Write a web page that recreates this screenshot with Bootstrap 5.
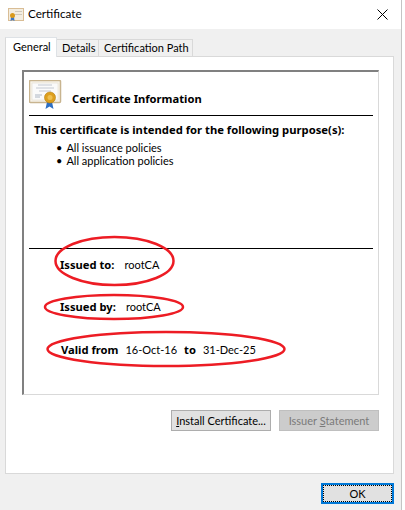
<!DOCTYPE html>
<html lang="en">
<head>
<meta charset="utf-8">
<title>Certificate</title>
<link href="https://cdn.jsdelivr.net/npm/bootstrap@5.3.0/dist/css/bootstrap.min.css" rel="stylesheet">
<style>
html,body{width:405px;height:510px;overflow:hidden;background:#fff;}
body{font-family:Lato,"Noto Sans",sans-serif;font-size:11px;color:#000;line-height:1.2;}
.dlg{position:relative;width:402px;height:510px;border-right:1px solid #c4c4c4;}
.ttl{height:29px;padding:0 13px 0 8px;background:#fff;}
.ttl-text{font-size:11.7px;margin-left:4px;margin-bottom:2px;}
.ttl-x{width:11px;height:11px;margin-left:auto;}
.gbody{height:481px;background:#f0f0f0;padding:8px 7px 0 5px;}
.tabset{border:0;height:19px;flex-wrap:nowrap;position:relative;z-index:1;}
.tabset .nav-link{font-size:11px;color:#000;background:#f0f0f0;border:1px solid #d9d9d9;border-left:0;border-radius:0;height:18px;margin-top:2px;padding:0 5px;line-height:16px;white-space:nowrap;}
.tabset .nav-link.active{background:#fff;color:#000;height:20px;margin-top:0;border-left:1px solid #d9d9d9;border-bottom:0;padding:0 7px;line-height:17px;}
.tabw1{width:52px;}.tabw2{width:42px;}.tabw3{width:94px;}
.pane{width:389px;height:418px;background:#fff;border:1px solid #d9d9d9;padding:13px 14px 0 16px;}
.infobox{width:357px;height:325px;border:1px solid #d9d9d9;border-top:2px solid #808080;border-left:2px solid #808080;padding:0 5px;}
.headrow{height:44px;border-bottom:1px solid #000;padding-top:8px;}
.headtext{font-family:"Noto Sans",sans-serif;font-weight:700;font-size:11.2px;margin-left:10px;margin-top:12px;}
.purpose{font-family:"Noto Sans",sans-serif;font-weight:700;margin:7px 0 0 5px;font-size:11.25px;white-space:nowrap;}
.plist{margin:4px 0 0 27px;padding:0;list-style:none;}
.plist li{height:13px;line-height:13px;}
.plist li::before{content:"•";margin-right:4px;}
.spacer-block{height:82px;border-bottom:1px solid #000;}
.detail{display:flex;align-items:center;height:14px;white-space:nowrap;}
.detail b{font-family:"Noto Sans",sans-serif;font-weight:700;font-size:11.2px;}
.d1{margin:9px 0 0 31px;}
.d2{margin:28px 0 0 31px;}
.d3{margin:29px 0 0 32px;}
.gap1{margin-left:10px;}.gap2{margin-left:7px;}
.btnrow{margin-top:15px;width:357px;gap:8px;}
.wbtn{width:100px;height:21px;padding:0;border-radius:0;font-size:11px;line-height:17px;background:#e1e1e1;border:1px solid #adadad;color:#000;white-space:nowrap;}
.wbtn:disabled{opacity:1;background:#cccccc;border-color:#bfbfbf;color:#7a7a7a;}
.footrow{padding-top:9px;}
.okbtn{width:73px;height:21px;padding:0;border-radius:0;font-size:11px;line-height:15px;background:#e1e1e1;border:2px solid #0078d7;color:#000;outline:1px dotted #000;outline-offset:-3px;}
.ovals{position:absolute;left:0;top:0;pointer-events:none;}
.cert-big{width:33px;height:29px;}
.cert-small{width:16px;height:14px;}
</style>
</head>
<body>
<div class="dlg">
  <div class="ttl d-flex align-items-center">
    <svg class="cert-small" viewBox="0 0 16 14"><rect x=".5" y=".5" width="15" height="12" fill="#f3ede0" stroke="#d9bd95"/><rect x="7" y="3" width="7" height="1" fill="#cfc8bb"/><rect x="7" y="6" width="7" height="1" fill="#cfc8bb"/><path d="M3 9l-.5 4 2-1 2 1-.5-4z" fill="#3b78c9"/><circle cx="4.500" cy="7.500" r="2.500" fill="#d99a1c"/></svg>
    <span class="ttl-text">Certificate</span>
    <svg class="ttl-x" viewBox="0 0 11 11"><path d="M.5.5l10 10M10.500.5l-10 10" stroke="#000" stroke-width="1" fill="none"/></svg>
  </div>
  <div class="gbody">
    <ul class="nav nav-tabs tabset">
      <li class="nav-item tabw1"><a class="nav-link active" href="#">General</a></li>
      <li class="nav-item tabw2"><a class="nav-link" href="#">Details</a></li>
      <li class="nav-item tabw3"><a class="nav-link" href="#">Certification Path</a></li>
    </ul>
    <div class="pane">
      <div class="infobox">
        <div class="headrow d-flex align-items-start">
          <svg class="cert-big" viewBox="0 0 33 29"><rect x=".5" y=".5" width="31" height="22" rx="1" fill="#f7f3ea" stroke="#c8b48f" stroke-width="1.500"/><rect x="3" y="3" width="26" height="17" fill="#fafafa" stroke="#e0d8c8" stroke-width=".5"/><path d="M9 5h14M7 8h18M10 11h12" stroke="#b6bcc8" stroke-width=".8"/><path d="M6 15h7M6 17h5" stroke="#9aa4b5" stroke-width=".8"/><path d="M18 22l-1.500 7 4-2.500 4 2.500-1.500-7z" fill="#2d6fc4"/><circle cx="21" cy="17.500" r="5.500" fill="#dd9f1e" stroke="#b67e10" stroke-width=".6"/><circle cx="21" cy="17.500" r="2.500" fill="#efc050"/></svg>
          <span class="headtext">Certificate Information</span>
        </div>
        <div class="purpose">This certificate is intended for the following purpose(s):</div>
        <ul class="plist">
          <li>All issuance policies</li>
          <li>All application policies</li>
        </ul>
        <div class="spacer-block"></div>
        <div class="detail d1"><b>Issued to:</b><span class="gap1">rootCA</span></div>
        <div class="detail d2"><b>Issued by:</b><span class="gap1">rootCA</span></div>
        <div class="detail d3"><b>Valid from</b><span class="gap2">16-Oct-16</span><b class="gap2">to</b><span class="gap2">31-Dec-25</span></div>
      </div>
      <div class="d-flex justify-content-end btnrow">
        <button type="button" class="btn wbtn"><u>I</u>nstall Certificate...</button>
        <button type="button" class="btn wbtn" disabled>Issuer <u>S</u>tatement</button>
      </div>
    </div>
    <div class="d-flex justify-content-end footrow">
      <button type="button" class="btn okbtn">OK</button>
    </div>
  </div>
  <svg class="ovals" width="405" height="510" viewBox="0 0 405 510" fill="none" stroke="#ed1c24" stroke-width="2.500">
    <ellipse cx="114.500" cy="261" rx="59" ry="24"/>
    <ellipse cx="114" cy="307" rx="69" ry="12"/>
    <ellipse cx="166" cy="349" rx="118.500" ry="17"/>
  </svg>
</div>
</body>
</html>
